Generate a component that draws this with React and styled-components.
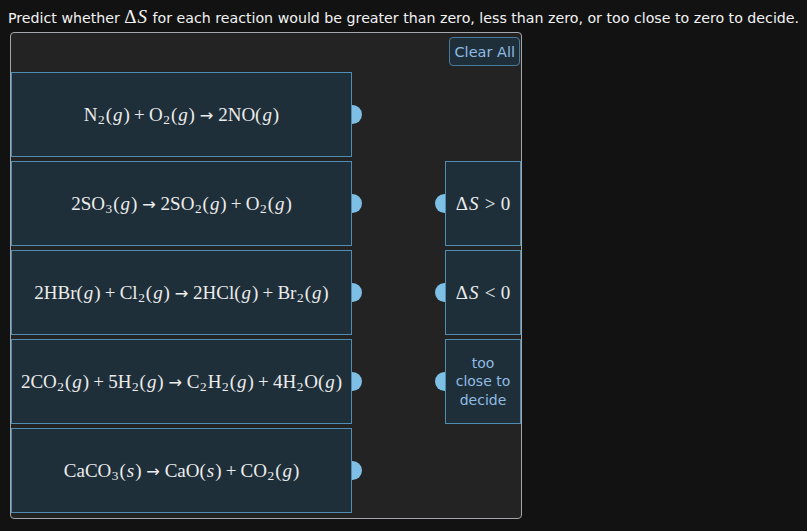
import React from 'react';
import styled, { createGlobalStyle } from 'styled-components';

const GlobalStyle = createGlobalStyle`
  html, body {
    margin: 0;
    background: #121212;
  }
  body {
    padding: 7px 0 0 8px;
    font-family: "DejaVu Sans", Verdana, sans-serif;
  }
`

const Prompt = styled.p`
  margin: 0;
  height: 20px;
  color: #f2f2f2;
  font-size: 14.2px;
  line-height: 20px;
  white-space: nowrap;
`

const Panel = styled.div`
  margin: 5px 0 0 2px;
  width: 510px;
  height: 485px;
  border: 1px solid #a3a6aa;
  border-radius: 4px;
  background: #232323;
  display: flex;
  flex-direction: column;
`

const Toolbar = styled.div`
  height: 39px;
  display: flex;
  justify-content: flex-end;
  align-items: flex-start;
  padding: 4px 1px 0 0;
  box-sizing: border-box;
`

const ClearButton = styled.button`
  height: 29px;
  padding: 0 4px;
  border: 1px solid #4a7a99;
  border-radius: 4px;
  background: #1f2f3a;
  color: #8fbbe2;
  font-family: "DejaVu Sans", Verdana, sans-serif;
  font-size: 14.5px;
  cursor: pointer;
`

const Board = styled.div`
  display: grid;
  grid-template-columns: 341px 1fr 76px;
  grid-template-rows: repeat(5, 85px);
  row-gap: 4px;
`

const Card = styled.div`
  position: relative;
  box-sizing: border-box;
  border: 1px solid #4f8db3;
  background: #1f2f3a;
  display: flex;
  align-items: center;
  justify-content: center;
  text-align: center;
  grid-column: ${p => (p.$side === 'right' ? 3 : 1)};
  grid-row: ${p => p.$row};

  &::after {
    content: '';
    position: absolute;
    top: 50%;
    width: 10px;
    height: 19px;
    margin-top: -9.5px;
    background: #7dbfe5;
    ${p =>
      p.$side === 'right'
        ? 'left: -11px; border-radius: 10px 0 0 10px;'
        : 'right: -11px; border-radius: 0 10px 10px 0;'}
  }
`

const Math = styled.span`
  font-family: "Liberation Serif", "Times New Roman", serif;
  font-size: ${p => p.$size || 19}px;
  line-height: 1;
  color: ${p => p.$color || '#ececec'};
  white-space: nowrap;
`

const I = styled.i`
  font-style: italic;
  padding: 0 0.05em;
`

const Sub = styled.sub`
  font-size: 0.7em;
  vertical-align: -0.22em;
  line-height: 0;
  margin: 0 0.08em 0 0.04em;
`

const Bin = styled.span`
  margin: 0 0.22em;
`

const Rel = styled.span`
  margin: 0 0.28em;
`

const Arrow = styled.span`
  font-family: "DejaVu Sans", sans-serif;
  font-size: 0.85em;
  margin: 0 0.3em;
`

const Words = styled.span`
  color: #8fbbe2;
  font-size: 14px;
  line-height: 18.5px;
`

const Phase = ({ s }) => (
  <>
    (<I>{s}</I>)
  </>
)

const To = () => <Arrow>→</Arrow>

const reactions = [
  <>
    N<Sub>2</Sub><Phase s="g" /><Bin>+</Bin>O<Sub>2</Sub><Phase s="g" /><To />2NO<Phase s="g" />
  </>,
  <>
    2SO<Sub>3</Sub><Phase s="g" /><To />2SO<Sub>2</Sub><Phase s="g" /><Bin>+</Bin>O<Sub>2</Sub><Phase s="g" />
  </>,
  <>
    2HBr<Phase s="g" /><Bin>+</Bin>Cl<Sub>2</Sub><Phase s="g" /><To />2HCl<Phase s="g" /><Bin>+</Bin>Br<Sub>2</Sub><Phase s="g" />
  </>,
  <>
    2CO<Sub>2</Sub><Phase s="g" /><Bin>+</Bin>5H<Sub>2</Sub><Phase s="g" /><To />C<Sub>2</Sub>H<Sub>2</Sub><Phase s="g" /><Bin>+</Bin>4H<Sub>2</Sub>O<Phase s="g" />
  </>,
  <>
    CaCO<Sub>3</Sub><Phase s="s" /><To />CaO<Phase s="s" /><Bin>+</Bin>CO<Sub>2</Sub><Phase s="g" />
  </>,
]

const App = () => (
  <>
    <GlobalStyle />
    <Prompt>
      Predict whether{' '}
      <Math $size={19} $color="#f2f2f2">
        Δ<I>S</I>
      </Math>{' '}
      for each reaction would be greater than zero, less than zero, or too close to zero to decide.
    </Prompt>
    <Panel>
      <Toolbar>
        <ClearButton>Clear All</ClearButton>
      </Toolbar>
      <Board>
        {reactions.map((r, i) => (
          <Card key={i} $row={i + 1}>
            <Math>{r}</Math>
          </Card>
        ))}
        <Card $side="right" $row={2}>
          <Math>
            Δ<I>S</I>
            <Rel>&gt;</Rel>0
          </Math>
        </Card>
        <Card $side="right" $row={3}>
          <Math>
            Δ<I>S</I>
            <Rel>&lt;</Rel>0
          </Math>
        </Card>
        <Card $side="right" $row={4}>
          <Words>
            too
            <br />
            close to
            <br />
            decide
          </Words>
        </Card>
      </Board>
    </Panel>
  </>
)

export default App
